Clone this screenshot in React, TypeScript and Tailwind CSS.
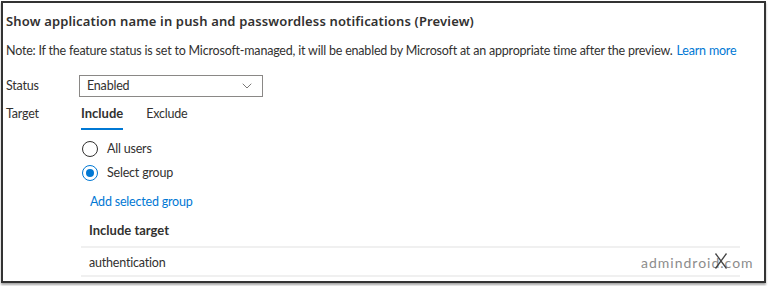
import { ChevronDown } from "lucide-react";

const font = { fontFamily: 'Lato, "Noto Sans", sans-serif' };
const body = "text-[12.5px] tracking-[-0.2px] text-[#323130]";

const Radio = ({ checked, label }: { checked?: boolean; label: string }) => (
  <div className="flex h-5 items-center">
    <span
      className={
        checked
          ? "flex h-4 w-4 items-center justify-center rounded-full border border-[#0078d4]"
          : "flex h-4 w-4 items-center justify-center rounded-full border border-[#323130]"
      }
    >
      {checked && <span className="h-2 w-2 rounded-full bg-[#0078d4]" />}
    </span>
    <span className={"ml-[9px] " + body}>{label}</span>
  </div>
);

export default function App() {
  return (
    <div className="h-[286px] w-[768px] bg-white pl-px pt-px" style={font}>
      <div className="relative h-[282px] w-[765px] border-2 border-[#333] pt-px shadow-[0_2px_2px_rgba(0,0,0,0.35)]">
        {/* Titre */}
        <div
          className="flex h-[34px] items-center whitespace-nowrap pl-[3px] pt-[2px] text-[13px] font-semibold tracking-[0.15px] text-[#323130]"
          style={{ fontFamily: '"Noto Sans", sans-serif' }}
        >
          Show application name in push and passwordless notifications (Preview)
        </div>

        {/* Note */}
        <div className={"flex h-[26px] items-center whitespace-nowrap pl-[3px] " + body}>
          Note: If the feature status is set to Microsoft-managed, it will be enabled by Microsoft at an appropriate time after the preview.
          <span className="ml-1 text-[#0078d4]">Learn more</span>
        </div>

        {/* Statut */}
        <div className="mt-[11px] flex h-[22px] items-center pl-[3px]">
          <span className={"w-[73px] " + body}>Status</span>
          <div className={"flex h-[22px] w-[184px] items-center justify-between border border-[#8a8886] pl-[7px] pr-[7px] " + body}>
            Enabled
            <ChevronDown className="h-4 w-4 text-[#605e5c]" strokeWidth={1.25} />
          </div>
        </div>

        {/* Cible */}
        <div className="mt-[7px] flex pl-[3px]">
          <span className={"flex h-5 w-[73px] items-center " + body}>Target</span>
          <div className="flex-1">
            <div className="ml-[2px] flex gap-[23px] text-[13px]">
              <span className="flex h-[26px] flex-col">
                <span className="flex h-5 items-center font-bold text-[#323130]">Include</span>
                <span className="mt-[4px] h-[2px] w-full bg-[#0078d4]" />
              </span>
              <span className={"flex h-5 items-center " + body}>Exclude</span>
            </div>

            <div className="ml-[3px] mt-[9px] flex flex-col gap-1">
              <Radio label="All users" />
              <Radio checked label="Select group" />
            </div>

            <div className="ml-[11px] mt-[9px] flex h-5 items-center text-[12.5px] tracking-[-0.2px] text-[#0078d4]">
              Add selected group
            </div>

            <div className="ml-[2px] mt-[8px] w-[659px]">
              <div className="flex h-[28px] items-start border-b-2 border-[#f0f0f0] pl-2 pt-[1px] text-[13px] font-bold text-[#323130]">
                Include target
              </div>
              <div className={"flex h-[29px] items-center border-b-2 border-[#f0f0f0] pl-2 pt-[4px] " + body}>
                authentication
              </div>
            </div>
          </div>
        </div>

        {/* Filigrane */}
        <span className="absolute left-[638px] top-[249px] text-[14px] tracking-[1px] text-[#8c8c8c]">
          admindroid.com
        </span>
        <svg className="absolute left-[711px] top-[249px]" width="14" height="18" viewBox="0 0 14 18">
          <path d="M1.5 1.5 L12.5 16.5 M12.5 1.5 L1.5 16.5" stroke="#444" strokeWidth="1.3" fill="none" />
        </svg>
      </div>
    </div>
  );
}
